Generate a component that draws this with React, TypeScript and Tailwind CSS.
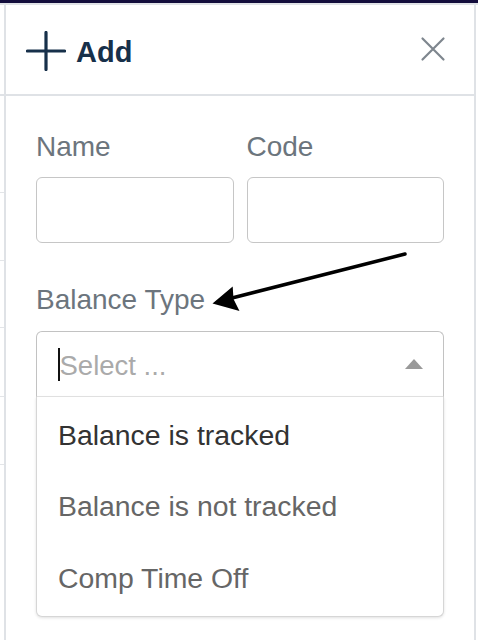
import React from "react";

export default function App() {
  return (
    <div className="relative w-[478px] h-[640px] bg-white flex flex-col font-['Liberation_Sans',Arial,sans-serif] overflow-hidden">
      <div className="h-[3px] bg-[#130d3c]" />
      <div className="h-[2px] bg-[#dfe2e6]" />
      <div className="flex flex-1">
        {/* left background strip */}
        <div className="w-[4px] flex flex-col">
          <div className="h-[91px] border-b-2 border-[#dfe2e6]" />
          <div className="h-[97px] border-b border-[#e3e5e8]" />
          <div className="h-[68px] border-b border-[#e3e5e8]" />
          <div className="h-[67px] border-b border-[#e3e5e8]" />
          <div className="h-[69px] border-b border-[#e3e5e8]" />
          <div className="h-[68px] border-b border-[#e3e5e8]" />
        </div>
        <div className="w-[2px] bg-[#dfe2e6]" />
        {/* panel */}
        <div className="flex-1 flex flex-col">
          <div className="h-[91px] border-b-2 border-[#dfe2e6] flex items-center justify-between pl-[20px] pr-[28px]">
            <div className="flex items-center gap-[10px]">
              <svg width="40" height="40" viewBox="0 0 40 40" className="mt-[3px]">
                <path d="M20 1.5V38.5M1.5 20H38.5" stroke="#17304a" strokeWidth="3.2" strokeLinecap="round" fill="none" />
              </svg>
              <span className="text-[29px] leading-[34px] font-bold text-[#17304a] mt-[5px]">Add</span>
            </div>
            <svg width="26" height="26" viewBox="0 0 26 26" className="mb-[2px]">
              <path d="M2.5 2.5L23.5 23.5M23.5 2.5L2.5 23.5" stroke="#7e868e" strokeWidth="2.2" strokeLinecap="round" fill="none" />
            </svg>
          </div>
          <div className="px-[30px] pt-[35px] flex flex-col">
            <div className="grid grid-cols-2 gap-[13px]">
              <div className="flex flex-col">
                <label className="text-[28px] leading-[32px] text-[#6c757d]">Name</label>
                <div className="mt-[14px] h-[66px] rounded-[6px] border-[1.5px] border-[#c6c6c6] bg-white" />
              </div>
              <div className="flex flex-col">
                <label className="text-[28px] leading-[32px] text-[#6c757d]">Code</label>
                <div className="mt-[14px] h-[66px] rounded-[6px] border-[1.5px] border-[#c6c6c6] bg-white" />
              </div>
            </div>
            <label className="mt-[41px] text-[28px] leading-[32px] text-[#6c757d]">Balance Type</label>
            <div className="mt-[15px] flex flex-col">
              <div className="h-[66px] rounded-t-[6px] border-t border-x border-[#c2c2c2] border-b border-b-[#e4e4e4] flex items-center justify-between pl-[21px] pr-[20px]">
                <div className="flex items-center">
                  <span className="w-[1.5px] h-[33px] bg-[#111]" />
                  <span className="text-[27.5px] leading-[32px] text-[#aaaaaa] mt-[3px]">Select ...</span>
                </div>
                <span className="w-0 h-0 border-x-[9.5px] border-x-transparent border-b-[10px] border-b-[#999999]" />
              </div>
              <div className="border-x border-b border-[#d6d6d6] rounded-b-[6px] shadow-[0_1px_3px_rgba(0,0,0,0.12)] pt-[2px] pb-[2px] bg-white">
                <div className="h-[71.5px] flex items-center pl-[21px] text-[28.4px] leading-[32px] text-[#333333]">Balance is tracked</div>
                <div className="h-[71.5px] flex items-center pl-[21px] text-[28.4px] leading-[32px] text-[#666666]">Balance is not tracked</div>
                <div className="h-[71.5px] flex items-center pl-[21px] text-[28.4px] leading-[32px] text-[#666666]">Comp Time Off</div>
              </div>
            </div>
          </div>
        </div>
        <div className="w-[2px] bg-[#dfe2e6]" />
        <div className="w-[2px]" />
      </div>
      {/* annotation arrow */}
      <svg className="absolute inset-0 pointer-events-none" width="478" height="640" viewBox="0 0 478 640">
        <path d="M405 254L232 298" stroke="#000" strokeWidth="3.5" strokeLinecap="round" fill="none" />
        <polygon points="212.5,303.5 232.7,286.5 233.5,299 239.5,311" fill="#000" />
      </svg>
    </div>
  );
}
